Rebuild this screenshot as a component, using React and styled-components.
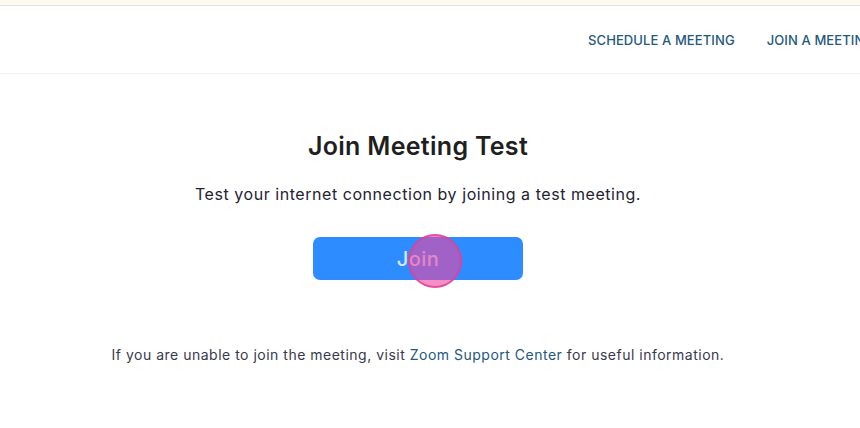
import React from 'react';
import styled, { createGlobalStyle } from 'styled-components';

const GlobalStyle = createGlobalStyle`
	html, body {
		margin: 0;
		padding: 0;
		background: #ffffff;
		font-family: Inter, "Noto Sans", Arial, sans-serif;
		overflow: hidden;
	}
`

const Page = styled.div`
	width: 860px;
	height: 428px;
	overflow: hidden;
	display: flex;
	flex-direction: column;
`

const TopStrip = styled.div`
	height: 5px;
	background: #fbfaf1;
	border-bottom: 1px solid #e6e4d8;
	flex-shrink: 0;
`

const Header = styled.header`
	height: 68px;
	border-bottom: 1px solid #f0f0f0;
	display: flex;
	align-items: center;
	padding-left: 576px;
	padding-top: 1px;
	box-sizing: border-box;
	overflow: hidden;
	flex-shrink: 0;
`

const NavLink = styled.a`
	flex-shrink: 0;
	padding: 0 12px;
	margin-right: 8px;
	font-size: 13px;
	font-weight: 500;
	letter-spacing: 0.1px;
	color: #24587c;
	text-transform: uppercase;
	text-decoration: none;
	white-space: nowrap;
`

const Main = styled.main`
	width: 836px;
	display: flex;
	flex-direction: column;
	align-items: center;
	padding-top: 57px;
`

const Title = styled.h1`
	margin: 0;
	font-size: 25px;
	font-weight: 600;
	letter-spacing: 0.3px;
	color: #1f1f1f;
	line-height: 30px;
`

const Subtitle = styled.p`
	margin: 22px 0 0;
	font-size: 16px;
	letter-spacing: 0.55px;
	color: #232333;
	line-height: 22px;
`

const JoinButton = styled.button`
	position: relative;
	margin-top: 32px;
	width: 210px;
	height: 43px;
	border: none;
	border-radius: 7px;
	background: #2d8cff;
	color: #d6e9ff;
	font-family: inherit;
	font-size: 20px;
	font-weight: 500;
	letter-spacing: 0.4px;
	cursor: pointer;
`

const ClickMarker = styled.span`
	position: absolute;
	left: 95px;
	top: -3px;
	width: 50px;
	height: 50px;
	border-radius: 50%;
	background: rgba(236, 70, 160, 0.6);
	border: 2px solid rgba(222, 64, 150, 0.8);
	pointer-events: none;
`

const Footer = styled.p`
	margin: 65px 0 0;
	font-size: 14px;
	letter-spacing: 0.5px;
	color: #39394d;
	line-height: 20px;
`

const SupportLink = styled.a`
	color: #24587c;
	text-decoration: none;
`

const App = () => {
	return (
		<Page>
			<GlobalStyle />
			<TopStrip />
			<Header>
				<NavLink href="#">Schedule a Meeting</NavLink>
				<NavLink href="#">Join a Meeting</NavLink>
				<NavLink href="#">Host a Meeting</NavLink>
			</Header>
			<Main>
				<Title>Join Meeting Test</Title>
				<Subtitle>Test your internet connection by joining a test meeting.</Subtitle>
				<JoinButton>
					Join
					<ClickMarker />
				</JoinButton>
				<Footer>
					If you are unable to join the meeting, visit <SupportLink href="#">Zoom Support Center</SupportLink> for useful information.
				</Footer>
			</Main>
		</Page>
	);
};

export default App;
